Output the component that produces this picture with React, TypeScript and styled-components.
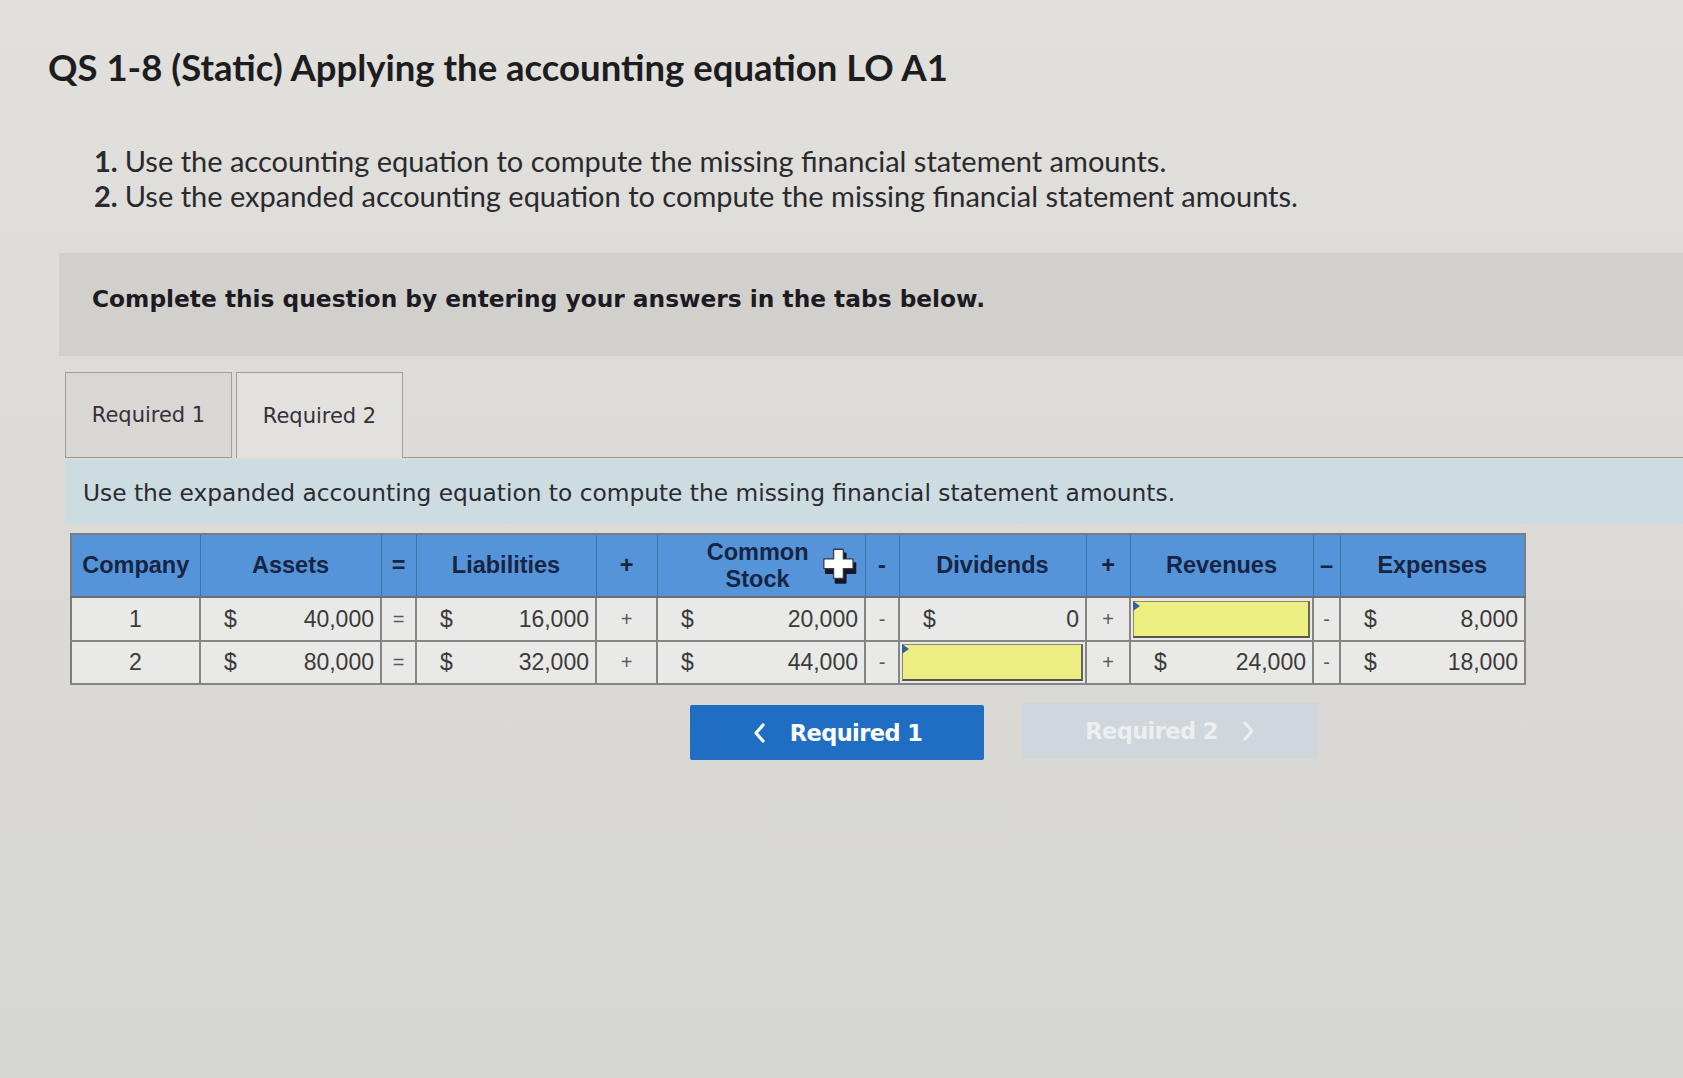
import React from 'react';
import styled, { createGlobalStyle } from 'styled-components';

const Global = createGlobalStyle`
  html, body { margin: 0; padding: 0; }
  body {
    width: 1683px;
    height: 1078px;
    overflow: hidden;
    background: #dcdbd8;
    font-family: Lato, "Open Sans", sans-serif;
    color: #222;
  }
`;

const Page = styled.div`
  width: 1683px;
  height: 1078px;
  box-sizing: border-box;
  padding-top: 47px;
  background: linear-gradient(180deg, #e1e0dd 0%, #dad9d6 60%, #d6d6d3 100%);
`;

const Title = styled.h1`
  margin: 0 0 0 48px;
  font-family: Lato, sans-serif;
  font-weight: 700;
  font-size: 36.5px;
  line-height: 40px;
  color: #1d1d20;
`;

const Steps = styled.ol`
  list-style: none;
  margin: 56px 0 0 94px;
  padding: 0;
  font-family: Lato, sans-serif;
  font-size: 29px;
  line-height: 35px;
  color: #2a2a2d;
`;

const StepNum = styled.b`
  font-weight: 700;
  margin-right: 7px;
`;

const Notice = styled.div`
  margin: 40px 0 0 59px;
  height: 103px;
  box-sizing: border-box;
  padding: 32px 0 0 33px;
  background: #d1d0cd;
  font-family: "DejaVu Sans", Verdana, sans-serif;
  font-weight: 700;
  font-size: 23.3px;
  line-height: 28px;
  color: #1c1a22;
`;

const TabRow = styled.div`
  display: flex;
  align-items: flex-end;
  gap: 4px;
  margin: 16px 0 0 65px;
  height: 86px;
`;

const Tab = styled.div<{ $active?: boolean }>`
  width: 167px;
  height: 86px;
  box-sizing: border-box;
  display: flex;
  align-items: center;
  justify-content: center;
  border: 1.5px solid #a09e9b;
  border-bottom: ${(p) => (p.$active ? 'none' : '1.5px solid #9a9895')};
  background: ${(p) => (p.$active ? '#e2e1de' : '#d8d7d4')};
  font-family: "DejaVu Sans", Verdana, sans-serif;
  font-size: 21px;
  color: #35303a;
`;

const TabFiller = styled.div`
  flex: 1;
  align-self: stretch;
  border-bottom: 1.5px solid #9a9895;
  margin-left: -4px;
`;

const Prompt = styled.div`
  margin: 2px 0 0 65px;
  height: 64px;
  box-sizing: border-box;
  padding-left: 18px;
  display: flex;
  align-items: center;
  background: #cddce1;
  font-family: "DejaVu Sans", Verdana, sans-serif;
  font-size: 23.3px;
  color: #2a2a30;
`;

const Grid = styled.table`
  margin: 9px 0 0 70px;
  border-collapse: collapse;
  table-layout: fixed;
  width: 1454px;
  font-family: "Liberation Sans", Arial, sans-serif;
  border: 2px solid #7c7c7c;
`;

const HeadRow = styled.tr`
  height: 63px;
`;

const BodyRow = styled.tr<{ $h: number }>`
  height: ${(p) => p.$h}px;
`;

const Th = styled.th`
  background: #5594d9;
  border: 1px solid #3f73ad;
  border-bottom: 2px solid #6e6e70;
  color: #172443;
  font-weight: 700;
  font-size: 23.5px;
  line-height: 27px;
  text-align: center;
  padding: 0;
`;

const Td = styled.td<{ $op?: boolean }>`
  background: #e9e9e7;
  border: 1px solid #858585;
  border-width: 1px 2px 2px 1px;
  padding: 0;
  font-size: 23px;
  color: ${(p) => (p.$op ? '#5a5a5a' : '#3a3a3a')};
  text-align: center;
  vertical-align: middle;
  ${(p) => (p.$op ? 'font-size: 20px;' : '')}
`;

const Money = styled.div`
  display: flex;
  justify-content: space-between;
  align-items: center;
  padding: 0 6px 0 23px;
`;

const InputCell = styled.div`
  position: relative;
  margin: 2px;
  height: calc(100% - 4px);
  min-height: 37px;
  box-sizing: border-box;
  background: #ecee82;
  border: 1px solid #8a8a6a;
  border-bottom: 2px solid #55554a;
  border-right: 2px solid #66665a;
`;

const Marker = styled.span`
  position: absolute;
  left: -1px;
  top: -1px;
  width: 0;
  height: 0;
  border-top: 5px solid transparent;
  border-bottom: 5px solid transparent;
  border-left: 7px solid #3a5f9e;
`;

const StockHead = styled.div`
  display: flex;
  align-items: center;
  justify-content: flex-end;
  gap: 12px;
  padding-right: 8px;
`;

const Buttons = styled.div`
  display: flex;
  gap: 38px;
  margin: 20px 0 0 690px;
  align-items: flex-start;
`;

const NavButton = styled.div<{ $disabled?: boolean }>`
  width: ${(p) => (p.$disabled ? '297px' : '294px')};
  height: ${(p) => (p.$disabled ? '56px' : '55px')};
  margin-top: ${(p) => (p.$disabled ? '-2px' : '0')};
  border-radius: 2px;
  display: flex;
  align-items: center;
  justify-content: center;
  gap: 24px;
  background: ${(p) => (p.$disabled ? '#cfd6dc' : '#1f6ec4')};
  color: ${(p) => (p.$disabled ? '#eceef0' : '#ffffff')};
  font-family: "DejaVu Sans", Verdana, sans-serif;
  font-weight: 700;
  font-size: 22.5px;
  letter-spacing: -0.6px;
`;

const PlusIcon = () => (
  <svg width="36" height="40" viewBox="0 0 32 37">
    <path
      d="M11 3h9v9h9v9h-9v9h-9v-9H2v-9h9z"
      fill="#161628"
      stroke="#161628"
      strokeWidth="2"
      strokeLinejoin="round"
      transform="translate(2 4)"
    />
    <path
      d="M11 3h9v9h9v9h-9v9h-9v-9H2v-9h9z"
      fill="#ffffff"
      stroke="#3a3a48"
      strokeWidth="1.2"
      strokeLinejoin="round"
    />
  </svg>
);

const Chevron = ({ dir }: { dir: 'left' | 'right' }) => (
  <svg width="14" height="22" viewBox="0 0 14 22">
    <polyline
      points={dir === 'left' ? '11,3 4,11 11,19' : '3,3 10,11 3,19'}
      fill="none"
      stroke="currentColor"
      strokeWidth="3.2"
      strokeLinecap="round"
      strokeLinejoin="round"
    />
  </svg>
);

const widths = [129, 181, 35, 180, 61, 208, 34, 187, 44, 183, 27, 185];

type Cell = { kind: 'text'; v: string } | { kind: 'op'; v: string } | { kind: 'money'; v: string } | { kind: 'input' };

const rows: { h: number; cells: Cell[] }[] = [
  {
    h: 44,
    cells: [
      { kind: 'text', v: '1' },
      { kind: 'money', v: '40,000' },
      { kind: 'op', v: '=' },
      { kind: 'money', v: '16,000' },
      { kind: 'op', v: '+' },
      { kind: 'money', v: '20,000' },
      { kind: 'op', v: '-' },
      { kind: 'money', v: '0' },
      { kind: 'op', v: '+' },
      { kind: 'input' },
      { kind: 'op', v: '-' },
      { kind: 'money', v: '8,000' },
    ],
  },
  {
    h: 42,
    cells: [
      { kind: 'text', v: '2' },
      { kind: 'money', v: '80,000' },
      { kind: 'op', v: '=' },
      { kind: 'money', v: '32,000' },
      { kind: 'op', v: '+' },
      { kind: 'money', v: '44,000' },
      { kind: 'op', v: '-' },
      { kind: 'input' },
      { kind: 'op', v: '+' },
      { kind: 'money', v: '24,000' },
      { kind: 'op', v: '-' },
      { kind: 'money', v: '18,000' },
    ],
  },
];

export default function App() {
  return (
    <>
      <Global />
      <Page>
        <Title>QS 1-8 (Static) Applying the accounting equation LO A1</Title>
        <Steps>
          <li>
            <StepNum>1.</StepNum>Use the accounting equation to compute the missing financial statement amounts.
          </li>
          <li>
            <StepNum>2.</StepNum>Use the expanded accounting equation to compute the missing financial statement amounts.
          </li>
        </Steps>
        <Notice>Complete this question by entering your answers in the tabs below.</Notice>
        <TabRow>
          <Tab>Required 1</Tab>
          <Tab $active>Required 2</Tab>
          <TabFiller />
        </TabRow>
        <Prompt>Use the expanded accounting equation to compute the missing financial statement amounts.</Prompt>
        <Grid>
          <colgroup>
            {widths.map((w, i) => (
              <col key={i} style={{ width: w }} />
            ))}
          </colgroup>
          <thead>
            <HeadRow>
              <Th>Company</Th>
              <Th>Assets</Th>
              <Th>=</Th>
              <Th>Liabilities</Th>
              <Th>+</Th>
              <Th>
                <StockHead>
                  <span>
                    Common
                    <br />
                    Stock
                  </span>
                  <PlusIcon />
                </StockHead>
              </Th>
              <Th>-</Th>
              <Th>Dividends</Th>
              <Th>+</Th>
              <Th>Revenues</Th>
              <Th>–</Th>
              <Th>Expenses</Th>
            </HeadRow>
          </thead>
          <tbody>
            {rows.map((r, ri) => (
              <BodyRow key={ri} $h={r.h}>
                {r.cells.map((c, ci) => {
                  if (c.kind === 'money')
                    return (
                      <Td key={ci}>
                        <Money>
                          <span>$</span>
                          <span>{c.v}</span>
                        </Money>
                      </Td>
                    );
                  if (c.kind === 'input')
                    return (
                      <Td key={ci}>
                        <InputCell>
                          <Marker />
                        </InputCell>
                      </Td>
                    );
                  if (c.kind === 'op')
                    return (
                      <Td key={ci} $op>
                        {c.v}
                      </Td>
                    );
                  return <Td key={ci}>{c.v}</Td>;
                })}
              </BodyRow>
            ))}
          </tbody>
        </Grid>
        <Buttons>
          <NavButton>
            <Chevron dir="left" />
            <span>Required 1</span>
          </NavButton>
          <NavButton $disabled>
            <span>Required 2</span>
            <Chevron dir="right" />
          </NavButton>
        </Buttons>
      </Page>
    </>
  );
}
